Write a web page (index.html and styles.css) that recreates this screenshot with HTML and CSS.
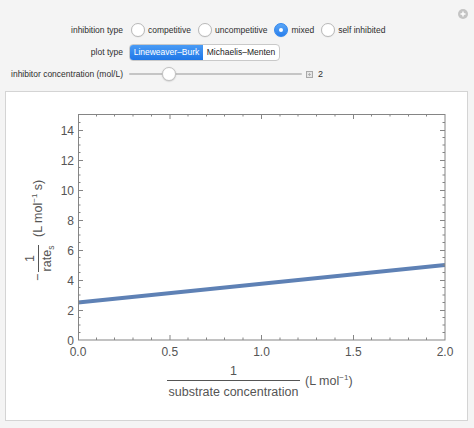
FILE: index.html
```html
<!DOCTYPE html>
<html>
<head>
<meta charset="utf-8">
<link rel="stylesheet" href="styles.css">
</head>
<body>
<div class="app">
  <div class="top">
    <span class="corner-btn"><svg width="10" height="10" viewBox="0 0 10 10"><circle cx="5" cy="5" r="5" fill="#c4c4c4"/><path d="M5 2.5v5M2.5 5h5" stroke="#fff" stroke-width="1.4"/></svg></span>
    <div class="row">
      <div class="label">inhibition type</div>
      <div class="radios">
        <label class="radio"><span class="dot"></span>competitive</label>
        <label class="radio"><span class="dot"></span>uncompetitive</label>
        <label class="radio"><span class="dot on"></span>mixed</label>
        <label class="radio"><span class="dot"></span>self inhibited</label>
      </div>
    </div>
    <div class="row">
      <div class="label">plot type</div>
      <div class="seg">
        <span class="seg-item active">Lineweaver–Burk</span>
        <span class="seg-item second">Michaelis–Menten</span>
      </div>
    </div>
    <div class="row">
      <div class="label">inhibitor concentration (mol/L)</div>
      <div class="slider">
        <span class="track"></span>
        <span class="thumb"></span>
      </div>
      <span class="mini"><svg width="7" height="7" viewBox="0 0 7 7"><rect x="0.5" y="0.5" width="6" height="6" fill="#e6e6e6" stroke="#a9a9a9"/><path d="M3.5 2v3M2 3.5h3" stroke="#a9a9a9" stroke-width="0.8"/></svg></span>
      <span class="value">2</span>
    </div>
  </div>
  <div class="panel">
    <svg class="plot" width="461" height="328" viewBox="0 0 461 328">
      <defs>
        <clipPath id="clip"><rect x="78" y="114" width="367" height="226"/></clipPath>
      </defs>
      <g transform="translate(-6,-92)">
        <g clip-path="url(#clip)">
          <line x1="78" y1="302.5" x2="445" y2="265" stroke="#5e81b5" stroke-width="4"/>
        </g>
        <rect x="78.5" y="114.5" width="366.5" height="225.5" fill="none" stroke="#858585" stroke-width="1"/>
        <path stroke="#858585" stroke-width="1" fill="none" d="
          M78 332.5h2.5 M78 325h2.5 M78 317.5h2.5 M78 310.5h5 M78 302.5h2.5 M78 295h2.5 M78 287.5h2.5 M78 280.5h5
          M78 272.5h2.5 M78 265h2.5 M78 257.5h2.5 M78 250.5h5 M78 242.5h2.5 M78 235h2.5 M78 227.5h2.5 M78 220.5h5
          M78 212.5h2.5 M78 205h2.5 M78 197.5h2.5 M78 190.5h5 M78 182.5h2.5 M78 175h2.5 M78 167.5h2.5 M78 160.5h5
          M78 152.5h2.5 M78 145h2.5 M78 137.5h2.5 M78 130.5h5 M78 122.5h2.5
          M445 332.5h-2.5 M445 325h-2.5 M445 317.5h-2.5 M445 310.5h-5 M445 302.5h-2.5 M445 295h-2.5 M445 287.5h-2.5 M445 280.5h-5
          M445 272.5h-2.5 M445 265h-2.5 M445 257.5h-2.5 M445 250.5h-5 M445 242.5h-2.5 M445 235h-2.5 M445 227.5h-2.5 M445 220.5h-5
          M445 212.5h-2.5 M445 205h-2.5 M445 197.5h-2.5 M445 190.5h-5 M445 182.5h-2.5 M445 175h-2.5 M445 167.5h-2.5 M445 160.5h-5
          M445 152.5h-2.5 M445 145h-2.5 M445 137.5h-2.5 M445 130.5h-5 M445 122.5h-2.5
          M96.5 340v-2.5 M114.5 340v-2.5 M133 340v-2.5 M151.5 340v-2.5 M170 340v-5 M188 340v-2.5 M206.5 340v-2.5 M224.5 340v-2.5 M243 340v-2.5 M261.5 340v-5
          M280 340v-2.5 M298 340v-2.5 M316.5 340v-2.5 M335 340v-2.5 M353.5 340v-5 M371.5 340v-2.5 M390 340v-2.5 M408.5 340v-2.5 M426.5 340v-2.5
          M96.5 114v2.5 M114.5 114v2.5 M133 114v2.5 M151.5 114v2.5 M170 114v5 M188 114v2.5 M206.5 114v2.5 M224.5 114v2.5 M243 114v2.5 M261.5 114v5
          M280 114v2.5 M298 114v2.5 M316.5 114v2.5 M335 114v2.5 M353.5 114v5 M371.5 114v2.5 M390 114v2.5 M408.5 114v2.5 M426.5 114v2.5
        "/>
        <g class="ticklbl" text-anchor="end">
          <text x="74" y="344.5">0</text>
          <text x="74" y="314.5">2</text>
          <text x="74" y="284.5">4</text>
          <text x="74" y="254.5">6</text>
          <text x="74" y="224.5">8</text>
          <text x="74" y="194.5">10</text>
          <text x="74" y="164.5">12</text>
          <text x="74" y="134.5">14</text>
        </g>
        <g class="ticklbl" text-anchor="middle">
          <text x="78" y="355.5">0.0</text>
          <text x="169.75" y="355.5">0.5</text>
          <text x="261.5" y="355.5">1.0</text>
          <text x="353.25" y="355.5">1.5</text>
          <text x="445" y="355.5">2.0</text>
        </g>
        <g class="axlbl">
          <text x="233.5" y="375" text-anchor="middle">1</text>
          <line x1="167" y1="380.5" x2="300" y2="380.5" stroke="#555" stroke-width="1"/>
          <text x="233.5" y="396" text-anchor="middle">substrate concentration</text>
          <text x="305" y="385">(L mol<tspan class="sup" dy="-5">−1</tspan><tspan dy="5">)</tspan></text>
        </g>
        <g class="axlbl" transform="translate(38,281) rotate(-90)">
          <text x="0" y="4">−</text>
          <line x1="9" y1="0.5" x2="36" y2="0.5" stroke="#555" stroke-width="1"/>
          <text x="22.5" y="-4" text-anchor="middle">1</text>
          <text x="22.5" y="13" text-anchor="middle">rate<tspan class="sub" dy="3">s</tspan></text>
          <text x="44" y="4">(L mol<tspan class="sup" dy="-5">−1</tspan><tspan dy="5"> s)</tspan></text>
        </g>
      </g>
    </svg>
  </div>
</div>
</body>
</html>
```

FILE: styles.css
```css
html, body {
  margin: 0;
  padding: 0;
}
body {
  background: #f4f4f4;
  font-family: "Liberation Sans", Arial, sans-serif;
  font-size: 8.5px;
  color: #2e2e2e;
  width: 474px;
  height: 428px;
  overflow: hidden;
}
.app {
  position: relative;
}
.top {
  height: 91px;
  padding-top: 19px;
  box-sizing: border-box;
}
.corner-btn {
  position: absolute;
  top: 9px;
  right: 6px;
  width: 10px;
  height: 10px;
  line-height: 0;
}
.row {
  display: flex;
  align-items: center;
  height: 22px;
}
.label {
  width: 129px;
  padding-right: 6px;
  box-sizing: border-box;
  text-align: right;
  white-space: nowrap;
}
.radios {
  display: flex;
  align-items: center;
  margin-left: 2px;
}
.radio {
  display: flex;
  align-items: center;
  gap: 3px;
  margin-right: 7px;
  white-space: nowrap;
}
.dot {
  width: 14px;
  height: 14px;
  border-radius: 50%;
  box-sizing: border-box;
  border: 1px solid #b9b9b9;
  background: #fff;
  box-shadow: 0 0.5px 1px rgba(0,0,0,0.08);
  position: relative;
}
.dot.on {
  border-color: #2f86ee;
  background: linear-gradient(#5aa6f7, #2a7fec);
}
.dot.on::after {
  content: "";
  position: absolute;
  left: 4px;
  top: 4px;
  width: 4px;
  height: 4px;
  border-radius: 50%;
  background: #fff;
}
.seg {
  display: flex;
  height: 17px;
  border: 1px solid #c9c9c9;
  border-radius: 4px;
  box-sizing: border-box;
  overflow: hidden;
  background: #fff;
}
.seg-item {
  display: flex;
  align-items: center;
  justify-content: center;
  width: 73px;
  white-space: nowrap;
  color: #222;
}
.seg-item.second {
  width: 76px;
}
.seg-item.active {
  background: linear-gradient(#4d9ef6, #1c74e6);
  color: #fff;
  margin: -1px 0 -1px -1px;
  padding-left: 1px;
}
.slider {
  position: relative;
  width: 173px;
  height: 14px;
  display: flex;
  align-items: center;
}
.track {
  display: block;
  width: 100%;
  height: 2px;
  border-radius: 1px;
  background: #c5c5c5;
}
.thumb {
  position: absolute;
  left: 33px;
  top: 0;
  width: 14px;
  height: 14px;
  border-radius: 50%;
  box-sizing: border-box;
  background: #fff;
  border: 1px solid #c2c2c2;
  box-shadow: 0 0.5px 1.5px rgba(0,0,0,0.2);
}
.mini {
  margin-left: 4px;
  line-height: 0;
}
.value {
  margin-left: 5px;
  font-size: 9px;
}
.panel {
  margin: 0 6px 0 5px;
  height: 330px;
  box-sizing: border-box;
  border: 1px solid #d4d4d4;
  background: #fff;
}
.plot {
  display: block;
}
.ticklbl text {
  font-family: "Liberation Sans", Arial, sans-serif;
  font-size: 12px;
  fill: #555;
}
.axlbl text {
  font-family: "Liberation Sans", Arial, sans-serif;
  font-size: 12.5px;
  fill: #555;
}
.axlbl .sup {
  font-size: 8px;
}
.axlbl .sub {
  font-size: 8.5px;
}
```
